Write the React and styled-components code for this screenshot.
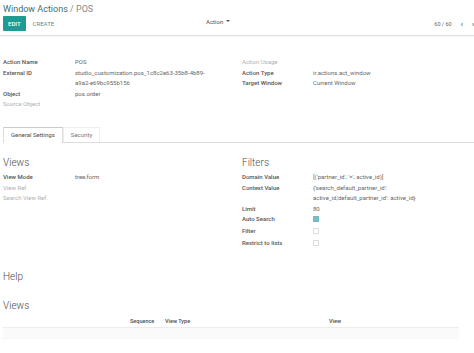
import styled, { createGlobalStyle } from "styled-components";

const GlobalStyle = createGlobalStyle`
  html, body {
    margin: 0;
    padding: 0;
    background: #ffffff;
    font-family: Roboto, "Liberation Sans", sans-serif;
    color: #4c4c4c;
  }
`;

const Page = styled.div`
  width: 474px;
  height: 353px;
  overflow: hidden;
  background: #fff;
`;

const ControlPanel = styled.div`
  padding: 3px 3px 0 3px;
  height: 32px;
  border-bottom: 1px solid #e2e2e2;
  box-shadow: 0 1px 1px rgba(0, 0, 0, 0.04);
`;

const Breadcrumb = styled.div`
  font-size: 9px;
  line-height: 12px;
  height: 13px;
  color: #888;
  span {
    color: #3f6f70;
  }
`;

const Toolbar = styled.div`
  display: flex;
  align-items: center;
  height: 15px;
`;

const Buttons = styled.div`
  display: flex;
  align-items: center;
  gap: 7px;
  width: 203px;
`;

const PrimaryButton = styled.div`
  background: #1e9c93;
  color: #fff;
  font-size: 6px;
  font-weight: 500;
  height: 15px;
  line-height: 15px;
  padding: 0 5px;
  border-radius: 1px;
`;

const LinkButton = styled.div`
  color: #4f8f8f;
  font-size: 6px;
`;

const ActionMenu = styled.div`
  font-size: 6px;
  color: #4c4c4c;
  display: flex;
  align-items: center;
  gap: 3px;
  margin-top: -5px;
  &::after {
    content: "";
    border-left: 2px solid transparent;
    border-right: 2px solid transparent;
    border-top: 2px solid #555;
  }
`;

const Pager = styled.div`
  margin-left: auto;
  display: flex;
  align-items: center;
  gap: 9px;
  font-size: 5.5px;
  color: #666;
  margin-right: -3px;
`;

const PagerArrow = styled.span`
  font-size: 7px;
  font-weight: 700;
  color: #555;
`;

const Sheet = styled.div`
  padding: 0 3px;
`;

const Columns = styled.div`
  display: grid;
  grid-template-columns: 239px 1fr;
  padding-top: ${(p) => p.$top}px;
`;

const Field = styled.div`
  display: grid;
  grid-template-columns: ${(p) => p.$label || 72}px 1fr;
  min-height: ${(p) => p.$h || 10.7}px;
  font-size: 6px;
  line-height: 10.5px;
  align-items: start;
`;

const Label = styled.div`
  color: ${(p) => (p.$muted ? "#b0b0b0" : "#555")};
  font-weight: ${(p) => (p.$muted ? 400 : 500)};
`;

const Value = styled.div`
  color: #666;
  line-height: 10.5px;
`;

const Tabs = styled.div`
  display: flex;
  margin-top: 17px;
  border-bottom: 1px solid #ddd;
  margin-right: -3px;
`;

const Tab = styled.div`
  font-size: 6px;
  height: 14px;
  line-height: 14px;
  padding: 0 7px;
  color: ${(p) => (p.$active ? "#4c4c4c" : "#777")};
  border: 1px solid ${(p) => (p.$active ? "#ddd" : "#eee")};
  border-bottom: none;
  background: #fff;
  margin-bottom: -1px;
  ${(p) => p.$active && "border-top-color: #ccc; height: 15px;"}
`;

const Heading = styled.div`
  font-size: 10px;
  font-weight: 300;
  color: #4c4c4c;
  line-height: 12px;
  margin-bottom: 3px;
`;

const Check = styled.div`
  width: 6px;
  height: 6px;
  margin-top: 2px;
  border: 1px solid ${(p) => (p.$checked ? "#77b7c0" : "#ddd")};
  background: ${(p) => (p.$checked ? "#7cbcc4" : "#fff")};
  box-sizing: border-box;
`;

const Section = styled.div`
  margin-top: ${(p) => p.$top}px;
`;

const Table = styled.div`
  margin-top: 5px;
  width: 456px;
`;

const TableHead = styled.div`
  display: grid;
  grid-template-columns: 127px 35px 164px 1fr;
  font-size: 5.5px;
  font-weight: 500;
  color: #4c4c4c;
  height: 10px;
  line-height: 9px;
  border-bottom: 1px solid #ececec;
`;

const TableRow = styled.div`
  height: 10px;
  background: #fafafa;
  box-shadow: 0 1px 1px rgba(0, 0, 0, 0.03);
`;

export default function App() {
  return (
    <Page>
      <GlobalStyle />
      <ControlPanel>
        <Breadcrumb>
          <span>Window Actions</span> / POS
        </Breadcrumb>
        <Toolbar>
          <Buttons>
            <PrimaryButton>EDIT</PrimaryButton>
            <LinkButton>CREATE</LinkButton>
          </Buttons>
          <ActionMenu>Action</ActionMenu>
          <Pager>
            <span>60 / 60</span>
            <PagerArrow>&lsaquo;</PagerArrow>
            <PagerArrow>&rsaquo;</PagerArrow>
          </Pager>
        </Toolbar>
      </ControlPanel>
      <Sheet>
        <Columns $top={21}>
          <div>
            <Field>
              <Label>Action Name</Label>
              <Value>POS</Value>
            </Field>
            <Field>
              <Label>External ID</Label>
              <Value>
                studio_customization.pos_1c8c2e63-35b8-4b89-
                <br />
                a9a2-e69bc955b156
              </Value>
            </Field>
            <Field>
              <Label>Object</Label>
              <Value>pos.order</Value>
            </Field>
            <Field>
              <Label $muted>Source Object</Label>
              <Value />
            </Field>
          </div>
          <div>
            <Field $label={71}>
              <Label $muted>Action Usage</Label>
              <Value />
            </Field>
            <Field $label={71}>
              <Label>Action Type</Label>
              <Value>ir.actions.act_window</Value>
            </Field>
            <Field $label={71}>
              <Label>Target Window</Label>
              <Value>Current Window</Value>
            </Field>
          </div>
        </Columns>
        <Tabs>
          <Tab $active>General Settings</Tab>
          <Tab>Security</Tab>
        </Tabs>
        <Columns $top={14}>
          <div>
            <Heading>Views</Heading>
            <Field>
              <Label>View Mode</Label>
              <Value>tree,form</Value>
            </Field>
            <Field>
              <Label $muted>View Ref.</Label>
              <Value />
            </Field>
            <Field>
              <Label $muted>Search View Ref.</Label>
              <Value />
            </Field>
          </div>
          <div>
            <Heading>Filters</Heading>
            <Field $label={71}>
              <Label>Domain Value</Label>
              <Value>[('partner_id', '=', active_id)]</Value>
            </Field>
            <Field $label={71}>
              <Label>Context Value</Label>
              <Value>
                {"{'search_default_partner_id':"}
                <br />
                {"active_id,'default_partner_id': active_id}"}
              </Value>
            </Field>
            <Field $label={71}>
              <Label>Limit</Label>
              <Value>80</Value>
            </Field>
            <Field $label={71} $h={11.7}>
              <Label>Auto Search</Label>
              <Check $checked />
            </Field>
            <Field $label={71} $h={11.7}>
              <Label>Filter</Label>
              <Check />
            </Field>
            <Field $label={71} $h={11.7}>
              <Label>Restrict to lists</Label>
              <Check />
            </Field>
          </div>
        </Columns>
        <Section $top={21}>
          <Heading>Help</Heading>
        </Section>
        <Section $top={17}>
          <Heading>Views</Heading>
          <Table>
            <TableHead>
              <span />
              <span>Sequence</span>
              <span>View Type</span>
              <span>View</span>
            </TableHead>
            <TableRow />
          </Table>
        </Section>
      </Sheet>
    </Page>
  );
}
